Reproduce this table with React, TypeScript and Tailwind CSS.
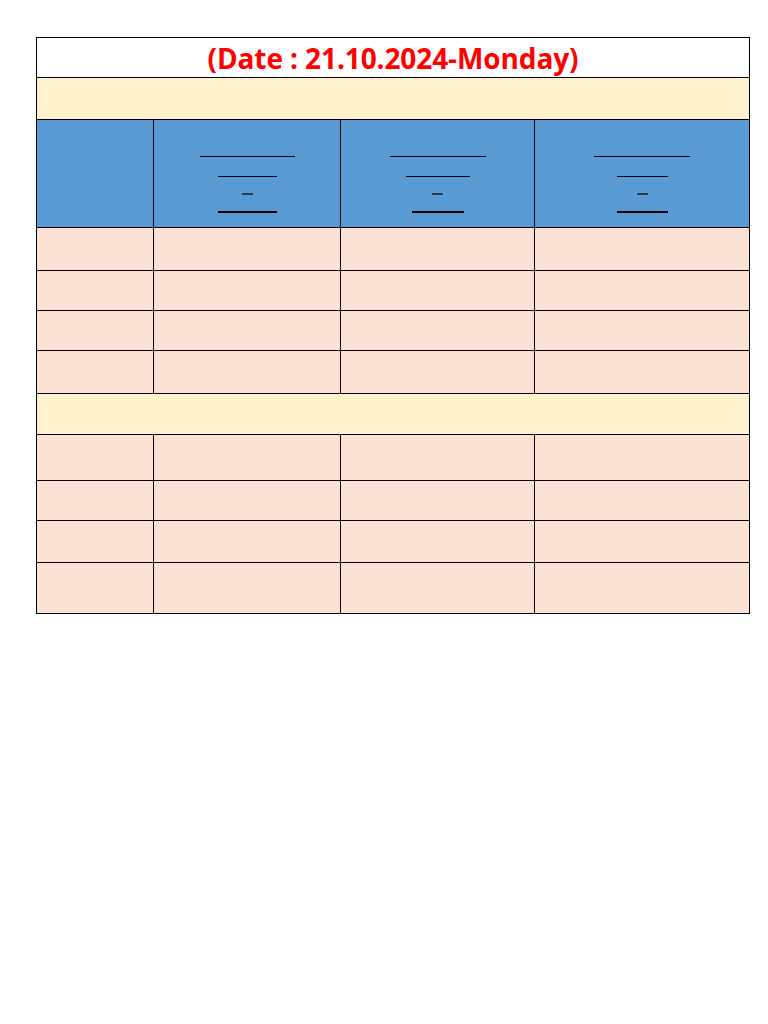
import React from 'react';

const widths = ['w-[116px]', 'w-[187px]', 'w-[194px]', 'w-[215px]'];

const headerLines = [
  ['w-[95px]', 'w-[59px]', 'w-[59px]'],
  ['w-[96px]', 'w-[64px]', 'w-[52px]'],
  ['w-[96px]', 'w-[51px]', 'w-[51px]'],
];

const topRows = ['h-[43px]', 'h-[40px]', 'h-[40px]', 'h-[43px]'];
const bottomRows = ['h-[46px]', 'h-[40px]', 'h-[42px]', 'h-[51px]'];

const BodyRow = ({ h }: { h: string }) => (
  <div className={`flex border-t border-black ${h}`}>
    {widths.map((w, i) => (
      <div key={i} className={`${w} bg-[#fbe2d5] ${i > 0 ? 'border-l border-black' : ''}`} />
    ))}
  </div>
);

const App = () => {
  return (
    <div className="min-h-screen bg-white pt-[37px] pl-[36px]" style={{ fontFamily: '"Open Sans", "Liberation Sans", sans-serif' }}>
      <div className="w-[714px] border border-black">
        <div className="h-[39px] flex items-center justify-center bg-white">
          <h1 className="text-[28px] font-bold text-[#ff0000] leading-none tracking-[-0.1px] pt-[1px]">(Date : 21.10.2024-Monday)</h1>
        </div>
        <div className="h-[42px] border-t border-black bg-[#fff2cc]" />
        <div className="flex h-[108px] border-t border-black">
          <div className={`${widths[0]} bg-[#5b9bd5]`} />
          {headerLines.map((lines, i) => (
            <div key={i} className={`${widths[i + 1]} bg-[#5b9bd5] border-l border-black flex flex-col items-center pt-[36px]`}>
              <div className={`${lines[0]} h-px bg-black`} />
              <div className={`${lines[1]} h-px bg-black mt-[19px]`} />
              <div className="w-[11px] h-[2px] bg-[#2d3b4a] mt-[16px]" />
              <div className={`${lines[2]} h-[2px] bg-black mt-[16px]`} />
            </div>
          ))}
        </div>
        {topRows.map((h, i) => (
          <BodyRow key={i} h={h} />
        ))}
        <div className="h-[41px] border-t border-black bg-[#fff2cc]" />
        {bottomRows.map((h, i) => (
          <BodyRow key={i} h={h} />
        ))}
      </div>
    </div>
  );
};

export default App;
